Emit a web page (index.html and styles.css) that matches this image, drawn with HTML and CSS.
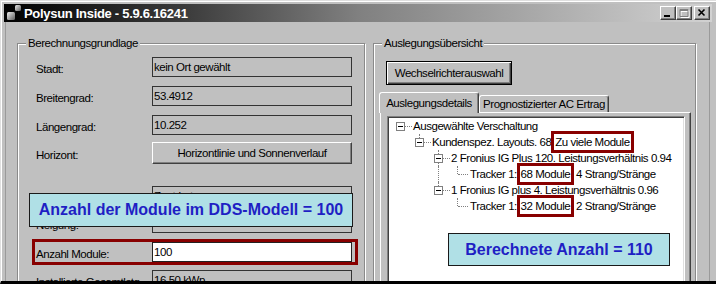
FILE: index.html
```html
<!DOCTYPE html>
<html lang="de">
<head>
    <meta charset="UTF-8">
    <meta name="viewport" content="width=device-width, initial-scale=1.0">
    <title>Polysun Inside</title>
    <link rel="stylesheet" href="styles.css">
</head>
<body>
    <div class="window">
        <div class="titlebar">
            <svg class="app-icon" width="16" height="16" viewBox="0 0 16 16">
                <defs>
                    <linearGradient id="cube" x1="0" y1="0" x2="1" y2="1">
                        <stop offset="0" stop-color="#ececec"/>
                        <stop offset="1" stop-color="#5e5e5e"/>
                    </linearGradient>
                </defs>
                <rect x="10" y="0" width="6" height="6" rx="1.5" fill="url(#cube)"/>
                <rect x="2" y="7" width="8" height="8" rx="1.5" fill="url(#cube)"/>
            </svg>
            <span class="title">Polysun Inside - 5.9.6.16241</span>
            <div class="caption-buttons">
                <span class="cap-btn">
                    <svg width="14" height="11" viewBox="0 0 14 11"><rect x="3" y="7" width="6" height="2" fill="#000"/></svg>
                </span>
                <span class="cap-btn">
                    <svg width="14" height="11" viewBox="0 0 14 11">
                        <path d="M4 2.5h8v7h-8z M4 3.5h8" fill="none" stroke="#fff" stroke-width="1"/>
                        <path d="M3 1.5h8v7h-8z M3 2.5h8" fill="none" stroke="#808080" stroke-width="1"/>
                    </svg>
                </span>
                <span class="cap-btn close">
                    <svg width="14" height="11" viewBox="0 0 14 11"><path d="M3.5 1.5l6 6 M9.5 1.5l-6 6" stroke="#000" stroke-width="1.6"/></svg>
                </span>
            </div>
        </div>

        <div class="client">
            <div class="panel">
                <section class="group group-basis">
                    <div class="group-title">Berechnungsgrundlage</div>
                    <div class="fields">
                        <div class="row"><span class="label">Stadt:</span><span class="field">kein Ort gewählt</span></div>
                        <div class="row"><span class="label">Breitengrad:</span><span class="field">53.4912</span></div>
                        <div class="row"><span class="label">Längengrad:</span><span class="field">10.252</span></div>
                        <div class="row row-button snug"><span class="label">Horizont:</span><span class="push">Horizontlinie und Sonnenverlauf</span></div>
                        <div class="row spaced"><span class="label">Ausrichtung:</span><span class="field">Zentriert</span></div>
                        <div class="row snug"><span class="label">Neigung:</span><span class="field"></span></div>
                        <div class="row flagged"><span class="label">Anzahl Module:</span><span class="field editable">100</span></div>
                        <div class="row tight"><span class="label">Installierte Gesamtlstg.</span><span class="field">16.50 kWp</span></div>
                    </div>
                </section>

                <section class="group group-design">
                    <div class="group-title">Auslegungsübersicht</div>
                    <div class="design-body">
                        <span class="push push-default">Wechselrichterauswahl</span>
                        <div class="tabs">
                            <span class="tab active">Auslegungsdetails</span>
                            <span class="tab">Prognostizierter AC Ertrag</span>
                        </div>
                        <div class="tab-page">
                            <div class="tree">
                                <div class="node">
                                    <span class="cell"><i class="ln-right"></i><b class="box"></b></span>
                                    <span class="text">Ausgewählte Verschaltung</span>
                                </div>
                                <div class="node">
                                    <span class="cell"></span>
                                    <span class="cell"><i class="ln-up"></i><i class="ln-right"></i><b class="box"></b></span>
                                    <span class="text">Kundenspez. Layouts. 68 <span class="mark">Zu viele Module</span></span>
                                </div>
                                <div class="node">
                                    <span class="cell"></span><span class="cell"></span>
                                    <span class="cell"><i class="ln-up"></i><i class="ln-down"></i><i class="ln-right"></i><b class="box"></b></span>
                                    <span class="text">2 Fronius IG Plus 120. Leistungsverhältnis 0.94</span>
                                </div>
                                <div class="node">
                                    <span class="cell"></span><span class="cell"></span>
                                    <span class="cell"><i class="ln-full"></i></span>
                                    <span class="cell"><i class="ln-half"></i><i class="ln-leaf"></i></span>
                                    <span class="text">Tracker 1: <span class="mark">68 Module</span> 4 Strang/Stränge</span>
                                </div>
                                <div class="node">
                                    <span class="cell"></span><span class="cell"></span>
                                    <span class="cell"><i class="ln-up"></i><i class="ln-right"></i><b class="box"></b></span>
                                    <span class="text">1 Fronius IG plus 4. Leistungsverhältnis 0.96</span>
                                </div>
                                <div class="node">
                                    <span class="cell"></span><span class="cell"></span><span class="cell"></span>
                                    <span class="cell"><i class="ln-half"></i><i class="ln-leaf"></i></span>
                                    <span class="text">Tracker 1: <span class="mark">32 Module</span> 2 Strang/Stränge</span>
                                </div>
                            </div>
                        </div>
                    </div>
                </section>
            </div>
        </div>

        <div class="callout callout-model">Anzahl der Module im DDS-Modell = 100</div>
        <div class="callout callout-calc">Berechnete Anzahl = 110</div>
    </div>
</body>
</html>
```

FILE: styles.css
```css
body {
    margin: 0;
    background: #c0c0c0;
    font-family: "Liberation Sans", Arial, sans-serif;
    font-size: 11.5px;
    letter-spacing: -0.45px;
    color: #000;
}

.window {
    position: relative;
    width: 716px; height: 284px;
    box-sizing: border-box;
    overflow: hidden;
    background: #c0c0c0;
    border-top: 1px solid #dfdfdf; border-left: 1px solid #dfdfdf;
    border-bottom: 3px solid #000;
    padding: 3px 4px 0 3px;
    box-shadow: inset 1px 1px 0 #fff;
}

/* title bar */
.titlebar {
    display: flex; align-items: center;
    height: 18px;
    padding: 0 2px 0 1px;
    background: linear-gradient(to right, #000 0%, #3a3a3a 25%, #808080 50%, #d2d2d2 100%);
}
.app-icon { flex: none; }
.title {
    margin-left: 3px;
    color: #fff; font-weight: bold; font-size: 13px; letter-spacing: -0.3px;
}
.caption-buttons { display: flex; margin-left: auto; }
.cap-btn {
    display: flex; align-items: center; justify-content: center;
    width: 16px; height: 14px; box-sizing: border-box;
    background: #c0c0c0;
    border: 1px solid; border-color: #fff #404040 #404040 #fff;
    box-shadow: inset -1px -1px 0 #808080;
}
.cap-btn.close { margin-left: 2px; }

/* client area */
.client { height: 259px; }
.panel {
    display: flex; align-items: flex-start; gap: 8px;
    height: 100%; box-sizing: border-box;
    margin: 0 2px 0 1px;
    padding: 21px 13px 0 11px;
    border-left: 1px solid #9a9a9a; border-right: 1px solid #9a9a9a;
}

.group {
    flex: none;
    height: 270px; box-sizing: border-box;
    border: 1px solid #8a8a8a;
    box-shadow: inset 1px 1px 0 #fff, 1px 1px 0 #fff;
}
.group-basis { width: 348px; }
.group-design { width: 323px; }
.group-title {
    width: max-content;
    margin: -7px 0 0 8px; padding: 0 2px;
    line-height: 13px;
    background: #c0c0c0;
}

/* left form */
.fields { margin-top: 7px; padding: 0 12px 0 18px; }
.row { display: flex; height: 20px; }
.row + .row { margin-top: 9px; }
.row + .row.snug { margin-top: 7px; }
.row + .row.spaced { margin-top: 22px; }
.row + .row.tight { margin-top: 8px; }
.row-button { height: 22px; }
.label { width: 116px; flex: none; align-self: center; padding-top: 3px; white-space: nowrap; }
.field {
    width: 200px; box-sizing: border-box;
    border: 1px solid #333;
    padding: 0 1px;
    line-height: 18px;
    white-space: nowrap; overflow: hidden;
}
.field.editable { background: #fff; border-color: #222; }
.row.flagged {
    margin-left: -1px; margin-right: -3px;
    padding: 0 3px 0 1px;
    outline: 3px solid #880000;
}

.push {
    display: flex; align-items: center; justify-content: center;
    width: 200px; height: 22px; box-sizing: border-box;
    border: 1px solid; border-color: #fff #404040 #404040 #fff;
    box-shadow: inset -1px -1px 0 #808080;
    white-space: nowrap;
}

/* right side */
.design-body { padding: 0 0 0 6px; }
.push-default {
    width: 126px; height: 24px;
    margin: 11px 0 0 6px;
    border: 1px solid #000;
    box-shadow: inset 1px 1px 0 #fff, inset -1px -1px 0 #404040, inset -2px -2px 0 #808080;
}

.tabs { display: flex; align-items: flex-end; height: 20px; margin-top: 7px; }
.tab {
    display: flex; align-items: center; justify-content: center;
    height: 17px; box-sizing: border-box;
    border: 1px solid; border-bottom: none;
    border-color: #fff #404040 transparent #fff;
    border-radius: 3px 3px 0 0;
    box-shadow: inset -1px 0 0 #808080;
    white-space: nowrap;
    width: 130px;
}
.tab.active {
    position: relative; z-index: 1;
    width: 100px; height: 21px;
    margin: 0 0 -1px -1px;
    background: #c0c0c0;
    padding-bottom: 1px;
}

.tab-page {
    width: 311px; height: 200px; box-sizing: border-box;
    border: 1px solid; border-color: #fff #404040 #404040 #fff;
    box-shadow: inset -1px -1px 0 #808080;
    padding: 3px 5px 0 6px;
}
.tree {
    height: 190px; box-sizing: border-box;
    background: #fff;
    border: 1px solid; border-color: #808080 #fff #fff #808080;
    box-shadow: inset 1px 1px 0 #404040, inset -1px -1px 0 #dfdfdf;
    padding: 1px 0 0 3px;
}
.node { display: flex; height: 16px; align-items: center; white-space: nowrap; }
.cell { position: relative; flex: none; width: 19px; height: 16px; }
.text { margin-left: 3px; line-height: 16px; }
.box {
    position: absolute; left: 5px; top: 4px;
    width: 9px; height: 9px; box-sizing: border-box;
    border: 1px solid #808080; background: #fff;
}
.box::after {
    content: ""; position: absolute; left: 1px; top: 3px;
    width: 5px; height: 1px; background: #000;
}
.cell i { position: absolute; border: 0 dotted #808080; }
.ln-up { left: 9px; top: 0; height: 4px; border-left-width: 1px !important; }
.ln-down { left: 9px; top: 13px; bottom: 0; border-left-width: 1px !important; }
.ln-full { left: 9px; top: 0; bottom: 0; border-left-width: 1px !important; }
.ln-half { left: 9px; top: 0; height: 8px; border-left-width: 1px !important; }
.ln-right { left: 14px; top: 8px; width: 7px; border-top-width: 1px !important; }
.ln-leaf { left: 10px; top: 8px; width: 10px; border-top-width: 1px !important; }

.mark { outline: 3px solid #880000; padding: 2px 1px; margin-right: 2px; }

/* annotation callouts */
.callout {
    position: absolute;
    display: flex; align-items: center; justify-content: center;
    box-sizing: border-box;
    border: 1px solid #1a1a1a;
    background: #b0e0e6;
    color: #1f1fc4;
    font-size: 16px; font-weight: bold; letter-spacing: 0;
    white-space: nowrap;
}
.callout-model { left: 28px; top: 192px; width: 324px; height: 34px; }
.callout-calc { left: 447px; top: 232px; width: 222px; height: 33px; }
```
